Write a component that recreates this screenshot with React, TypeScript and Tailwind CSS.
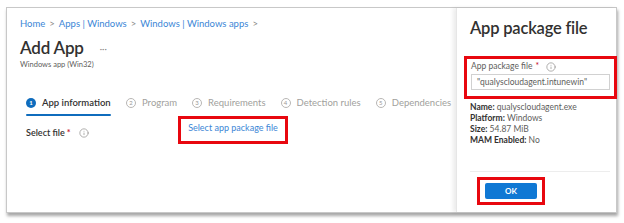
import { Info } from 'lucide-react'

const font = { fontFamily: 'Lato, "Noto Sans", Arial, sans-serif' }

function StepDot({ n, active = false }: { n: number; active?: boolean }) {
  return active ? (
    <span className="flex h-[10px] w-[10px] items-center justify-center rounded-full bg-[#0f6cbd] text-[6px] font-bold leading-none text-white">
      {n}
    </span>
  ) : (
    <span className="flex h-[10px] w-[10px] items-center justify-center rounded-full border border-[#b8b6b4] text-[6px] leading-none text-[#9a9896]">
      {n}
    </span>
  )
}

function InfoIcon() {
  return <Info className="h-[10px] w-[10px] text-[#8a8886]" strokeWidth={1.6} />
}

const steps = ['Program', 'Requirements', 'Detection rules', 'Dependencies']

export default function App() {
  return (
    <div className="h-[223px] w-[624px] overflow-hidden bg-white pl-[6px] pt-[7px]" style={font}>
      <div className="flex h-[206px] w-[611px] border border-[#c8c8c8] bg-white shadow-[1px_3px_3px_rgba(0,0,0,0.35)]">
        {/* main blade */}
        <div className="w-[449px] shrink-0 overflow-hidden pl-[13px] pt-[9px]">
          <div className="flex items-center gap-[4px] text-[9.5px] leading-[14px] text-[#3b86d6]">
            <span>Home</span>
            <span className="text-[#8a8886]">&gt;</span>
            <span>Apps | Windows</span>
            <span className="text-[#8a8886]">&gt;</span>
            <span>Windows | Windows apps</span>
            <span className="text-[#8a8886]">&gt;</span>
          </div>
          <div className="mt-[5px] flex items-center gap-[16px]">
            <span className="text-[17px] font-semibold leading-[24px] tracking-[-0.2px] text-[#323130]">Add App</span>
            <span className="text-[9px] leading-none text-[#8a8886]">···</span>
          </div>
          <div className="text-[7.5px] leading-[10px] text-[#605e5c]">Windows app (Win32)</div>

          <div className="mt-[26px] flex items-start whitespace-nowrap pl-[6px] text-[9.5px] leading-[14px]">
            <div className="flex flex-col">
              <div className="flex items-center gap-[6px]">
                <StepDot n={1} active />
                <span className="font-semibold text-[#323130]">App information</span>
              </div>
              <div className="mt-[4px] h-[2px] w-[85px] rounded bg-[#0f6cbd]" />
            </div>
            {steps.map((s, i) => (
              <div key={s} className="ml-[15px] flex items-center gap-[6px] text-[#a19f9d]">
                <StepDot n={i + 2} />
                <span>{s}</span>
              </div>
            ))}
          </div>

          <div className="flex items-start pl-[6px]">
            <div className="mt-[11px] flex w-[152px] items-center gap-[2px] text-[9px] font-semibold leading-[12px] text-[#323130]">
              <span>Select file</span>
              <span className="text-[#c50f1f]">*</span>
              <span className="ml-[6px]">
                <InfoIcon />
              </span>
            </div>
            <div className="flex h-[28px] w-[110px] items-center justify-center border-[3px] border-[#e8070f] pb-[4px] text-[9px] text-[#3b86d6]">
              Select app package file
            </div>
          </div>
        </div>

        {/* context pane */}
        <div className="flex flex-1 flex-col border-l border-[#e6e6e6] shadow-[-3px_0_4px_rgba(0,0,0,0.08)]">
          <div className="pl-[13px] pt-[8px] text-[16.5px] font-semibold leading-[24px] tracking-[-0.2px] text-[#323130]">
            App package file
          </div>
          <div className="ml-[7px] mt-[16px] h-[43px] w-[153px] border-[3px] border-[#e8070f] pl-[4px] pt-[2px]">
            <div className="flex items-center gap-[3px] text-[8.5px] leading-[11px] text-[#605e5c]">
              <span>App package file</span>
              <span className="text-[#c50f1f]">*</span>
              <span className="ml-[4px]">
                <InfoIcon />
              </span>
            </div>
            <div className="mt-[2px] flex h-[16px] w-[139px] items-center border border-[#d1d1d1] pl-[5px] text-[8.5px] leading-none text-[#605e5c]">
              "qualyscloudagent.intunewin"
            </div>
          </div>
          <div className="mt-[3px] pl-[13px] text-[8.5px] leading-[11px] text-[#605e5c]">
            <p><b className="text-[#323130]">Name:</b> qualyscloudagent.exe</p>
            <p><b className="text-[#323130]">Platform:</b> Windows</p>
            <p><b className="text-[#323130]">Size:</b> 54.87 MiB</p>
            <p><b className="text-[#323130]">MAM Enabled:</b> No</p>
          </div>
          <div className="ml-[13px] mt-[25px] h-px w-[140px] bg-[#ededed]" />
          <div className="ml-[20px] mt-[5px] flex h-[28px] w-[68px] items-center justify-center border-[3px] border-[#e8070f]">
            <button type="button" className="flex h-[16px] w-[52px] items-center justify-center rounded-[2px] bg-[#0f78d4] text-[8px] font-bold text-white">
              OK
            </button>
          </div>
        </div>
      </div>
    </div>
  )
}
